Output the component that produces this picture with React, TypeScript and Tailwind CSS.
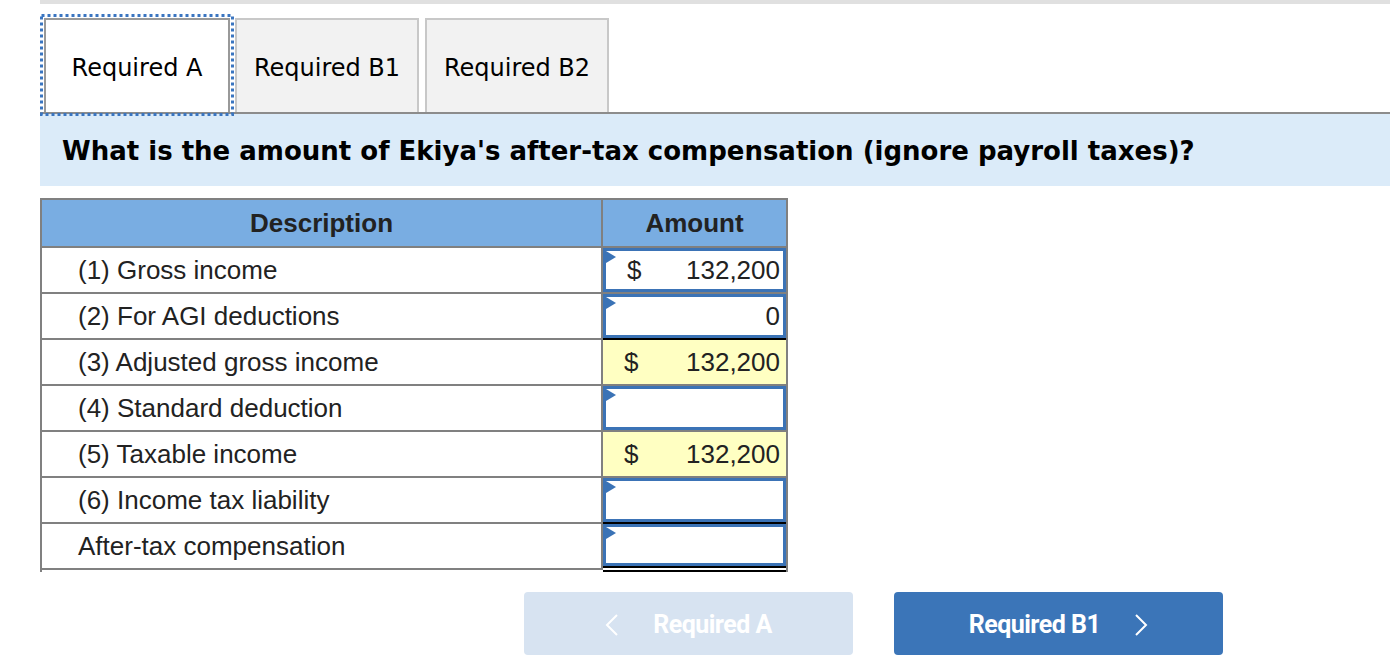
import React from "react";

type Row = {
  label: string;
  kind: "input" | "total";
  dollar?: boolean;
  value?: string;
  topLine?: "gray" | "black";
};

const rows: Row[] = [
  { label: "(1) Gross income", kind: "input", dollar: true, value: "132,200" },
  { label: "(2) For AGI deductions", kind: "input", value: "0" },
  { label: "(3) Adjusted gross income", kind: "total", dollar: true, value: "132,200", topLine: "black" },
  { label: "(4) Standard deduction", kind: "input" },
  { label: "(5) Taxable income", kind: "total", dollar: true, value: "132,200" },
  { label: "(6) Income tax liability", kind: "input" },
  { label: "After-tax compensation", kind: "input", topLine: "black" },
];

function Marker() {
  return (
    <span className="absolute left-0 top-0 h-0 w-0 border-y-[6px] border-l-[10px] border-y-transparent border-l-[#3b73b6]" />
  );
}

function AmountCell({ row, last }: { row: Row; last: boolean }) {
  const top = row.topLine === "black" ? "border-t-black" : "border-t-[#808080]";
  const content = (
    <>
      {row.dollar && <span className="absolute left-[21px]">$</span>}
      <span className="ml-auto">{row.value ?? ""}</span>
    </>
  );
  return (
    <div className={`w-[183px] border-t-2 ${top} ${last ? "border-b-[6px] border-b-black border-double" : ""}`}>
      {row.kind === "input" ? (
        <div className={`relative flex items-center border-[3px] border-[#3b73b6] bg-white pr-[3px] ${last ? "h-[42px]" : "h-[44px]"}`}>
          <Marker />
          {content}
        </div>
      ) : (
        <div className="relative flex h-[44px] items-center bg-[#ffffc2] pr-[6px]">{content}</div>
      )}
    </div>
  );
}

export default function App() {
  return (
    <div className="h-[664px] w-[1390px] overflow-hidden bg-white pl-[40px] text-[#222]">
      <div className="h-[4px] bg-[#e0e0e0]" />

      {/* tabs */}
      <div className="mt-[14px] flex h-[96px] border-b-2 border-[#8c8c8c] font-['DejaVu_Sans',sans-serif] text-[24px] text-black">
        <div className="relative ml-[4px] w-[186px]">
          <div className="flex h-full items-center justify-center border-2 border-b-0 border-[#999] bg-white pt-[4px]">
            Required A
          </div>
          <svg className="absolute -left-[4px] -top-[4px] z-10" width="194" height="102" viewBox="0 0 194 102">
            <rect x="1.5" y="1.5" width="191" height="99" fill="none" stroke="#3a75c0" strokeWidth="3" strokeDasharray="3 3" />
          </svg>
        </div>
        <div className="ml-[5px] flex w-[184px] items-center justify-center border-2 border-b-0 border-[#c8c8c8] bg-[#f2f2f2] pt-[4px]">
          Required B1
        </div>
        <div className="ml-[6px] flex w-[184px] items-center justify-center border-2 border-b-0 border-[#c8c8c8] bg-[#f2f2f2] pt-[4px]">
          Required B2
        </div>
      </div>

      <div className="flex h-[72px] items-center bg-[#dbebf9] pl-[22px] pt-[2px] font-['DejaVu_Sans',sans-serif] text-[26px] font-bold text-black">
        What is the amount of Ekiya's after-tax compensation (ignore payroll taxes)?
      </div>

      {/* table */}
      <div className="mt-[12px] w-[748px] border-x-2 border-t-2 border-[#808080] font-['Liberation_Sans',Arial,sans-serif] text-[26px]">
        <div className="flex h-[46px] bg-[#79ade2] font-bold">
          <div className="flex w-[561px] items-center justify-center border-r-2 border-[#808080]">Description</div>
          <div className="flex w-[183px] items-center justify-center">Amount</div>
        </div>
        {rows.map((row, i) => {
          const last = i === rows.length - 1;
          return (
            <div key={row.label} className="flex">
              <div
                className={`flex w-[561px] items-center border-r-2 border-t-2 border-[#808080] pl-[36px] ${
                  last ? "h-[48px] border-b-2" : "h-[46px]"
                }`}
              >
                {row.label}
              </div>
              <AmountCell row={row} last={last} />
            </div>
          );
        })}
      </div>

      {/* nav buttons */}
      <div className="ml-[484px] mt-[20px] flex gap-[41px] font-['Roboto',sans-serif] text-[25px] font-bold tracking-[-0.5px] text-white">
        <button className="flex h-[63px] w-[329px] items-center justify-center gap-[34px] rounded-[4px] bg-[#d7e3f1] pt-[3px]">
          <svg width="14" height="24" viewBox="0 0 14 24">
            <path d="M12 2 L2 12 L12 22" fill="none" stroke="white" strokeWidth="2" />
          </svg>
          <span>Required A</span>
        </button>
        <button className="flex h-[63px] w-[329px] items-center justify-center gap-[34px] rounded-[4px] bg-[#3b75b8] pt-[3px]">
          <span>Required B1</span>
          <svg width="14" height="24" viewBox="0 0 14 24">
            <path d="M2 2 L12 12 L2 22" fill="none" stroke="white" strokeWidth="2" />
          </svg>
        </button>
      </div>
    </div>
  );
}
